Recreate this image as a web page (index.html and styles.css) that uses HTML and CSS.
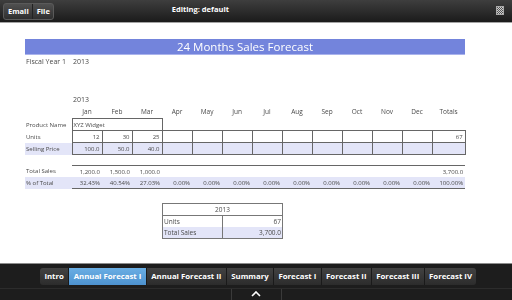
FILE: index.html
```html
<!DOCTYPE html>
<html lang="en">
<head>
    <meta charset="UTF-8">
    <title>24 Months Sales Forecast</title>
    <link rel="stylesheet" href="styles.css">
</head>
<body>

    <!-- Top toolbar -->
    <div class="topbar">
        <div class="btn-group">
            <div class="btn">Email</div>
            <div class="btn">File</div>
        </div>
        <div class="doc-title">Editing: default</div>
        <div class="fullscreen"></div>
    </div>

    <!-- Sheet -->
    <div class="page">
        <div class="sheet">
            <div class="sheet-title">24 Months Sales Forecast</div>

            <table class="grid">
                <colgroup>
                    <col class="c-label">
                    <col span="12" class="c-month">
                    <col class="c-total">
                </colgroup>
                <tr class="row-fiscal">
                    <td class="label big">Fiscal Year 1</td>
                    <td class="big" colspan="3">2013</td>
                    <td colspan="10"></td>
                </tr>
                <tr class="row-gap"><td colspan="14"></td></tr>
                <tr>
                    <td></td>
                    <td class="big" colspan="3">2013</td>
                    <td colspan="10"></td>
                </tr>
                <tr class="row-months">
                    <td></td>
                    <td>Jan</td><td>Feb</td><td>Mar</td><td>Apr</td><td>May</td><td>Jun</td>
                    <td>Jul</td><td>Aug</td><td>Sep</td><td>Oct</td><td>Nov</td><td>Dec</td>
                    <td>Totals</td>
                </tr>
                <tr>
                    <td class="label">Product Name</td>
                    <td class="box left" colspan="3">XYZ Widget</td>
                    <td colspan="10"></td>
                </tr>
                <tr>
                    <td class="label">Units</td>
                    <td class="box">12</td><td class="box">30</td><td class="box">25</td>
                    <td class="box"></td><td class="box"></td><td class="box"></td>
                    <td class="box"></td><td class="box"></td><td class="box"></td>
                    <td class="box"></td><td class="box"></td><td class="box"></td>
                    <td class="box">67</td>
                </tr>
                <tr class="shade">
                    <td class="label">Selling Price</td>
                    <td class="box">100.0</td><td class="box">50.0</td><td class="box">40.0</td>
                    <td class="box"></td><td class="box"></td><td class="box"></td>
                    <td class="box"></td><td class="box"></td><td class="box"></td>
                    <td class="box"></td><td class="box"></td><td class="box"></td>
                    <td class="box"></td>
                </tr>
                <tr class="row-gap-sm"><td colspan="14"></td></tr>
                <tr class="row-top">
                    <td class="label">Total Sales</td>
                    <td>1,200.0</td><td>1,500.0</td><td>1,000.0</td>
                    <td></td><td></td><td></td><td></td><td></td>
                    <td></td><td></td><td></td><td></td>
                    <td>3,700.0</td>
                </tr>
                <tr class="shade row-bottom">
                    <td class="label">% of Total</td>
                    <td>32.43%</td><td>40.54%</td><td>27.03%</td>
                    <td>0.00%</td><td>0.00%</td><td>0.00%</td><td>0.00%</td><td>0.00%</td>
                    <td>0.00%</td><td>0.00%</td><td>0.00%</td><td>0.00%</td>
                    <td>100.00%</td>
                </tr>
            </table>

            <table class="summary">
                <tr><td class="head" colspan="2">2013</td></tr>
                <tr><td>Units</td><td class="num">67</td></tr>
                <tr class="shade"><td>Total Sales</td><td class="num">3,700.0</td></tr>
            </table>
        </div>
    </div>

    <!-- Sheet tabs -->
    <div class="bottombar">
        <div class="tabs">
            <div class="tab">Intro</div>
            <div class="tab active">Annual Forecast I</div>
            <div class="tab">Annual Forecast II</div>
            <div class="tab">Summary</div>
            <div class="tab">Forecast I</div>
            <div class="tab">Forecast II</div>
            <div class="tab">Forecast III</div>
            <div class="tab">Forecast IV</div>
        </div>
        <div class="handle">
            <div class="handle-side"></div>
            <div class="handle-mid">
                <svg width="10" height="6" viewBox="0 0 10 6"><path d="M1 5 L5 1 L9 5" fill="none" stroke="#fff" stroke-width="1.6"/></svg>
            </div>
            <div class="handle-side"></div>
        </div>
    </div>

</body>
</html>
```

FILE: styles.css
```css
body {
    margin: 0;
    width: 512px;
    height: 300px;
    overflow: hidden;
    font-family: "Open Sans", "Noto Sans", sans-serif;
    background: #fff;
}

/* top toolbar */
.topbar {
    height: 22px;
    display: flex;
    align-items: center;
    padding: 0 3px;
    background: linear-gradient(#3e3e3e, #1b1b1b);
    border-bottom: 1px solid #a4a4a4;
}
.btn-group {
    display: flex;
    height: 15px;
    border: 1px solid #5a5a5a;
    border-radius: 3px;
    background: linear-gradient(#505050, #2f2f2f);
}
.btn {
    color: #fff;
    font-size: 7.5px;
    font-weight: bold;
    line-height: 15px;
    padding: 0 3px 0 4px;
}
.btn + .btn {
    border-left: 1px solid #222;
}
.doc-title {
    margin-left: 118px;
    color: #fff;
    font-size: 7.5px;
    font-weight: bold;
    margin-top: -4px;
}
.fullscreen {
    margin-left: auto;
    margin-right: 5px;
    margin-top: -2px;
    width: 6px;
    height: 7px;
    border: 1px solid #aaa;
    background: repeating-conic-gradient(#ccc 0 25%, #555 0 50%) 0 0 / 2px 2px;
}

/* sheet */
.page {
    height: 240px;
}
.sheet {
    margin-left: 25px;
    padding-top: 16px;
    width: 440px;
    will-change: transform;
}
.sheet-title {
    height: 15px;
    line-height: 15px;
    background: #7384dc;
    border-bottom: 1px solid #aab3ec;
    color: #fff;
    font-size: 11.5px;
    text-align: center;
}
.grid {
    border-collapse: collapse;
    table-layout: fixed;
    width: 440px;
    font-size: 6px;
    color: #4a4a4a;
}
.c-label { width: 47px; }
.c-month { width: 30px; }
.c-total { width: 33px; }
.grid td {
    height: 11px;
    padding: 0 2px;
    text-align: right;
    white-space: nowrap;
    overflow: hidden;
}
.grid td.label,
.grid td.left {
    text-align: left;
    padding-left: 1px;
}
.grid td.big {
    text-align: left;
    font-size: 7px;
    padding-left: 1px;
}
.row-fiscal td { height: 13px; }
.row-gap td { height: 26px; }
.row-gap-sm td { height: 10px; }
.row-months td {
    text-align: center;
    font-size: 6.5px;
    height: 13px;
}
.grid td.box {
    border: 1px solid #666;
}
.shade td {
    background: #e3e5f8;
}
.row-top td:not(.label) {
    border-top: 1px solid #666;
}
.row-bottom td:not(.label) {
    border-bottom: 1px solid #666;
}

/* summary */
.summary {
    margin: 14px 0 0 137px;
    width: 121px;
    border-collapse: collapse;
    table-layout: fixed;
    font-size: 6.5px;
    color: #4a4a4a;
    border: 1px solid #777;
}
.summary td {
    height: 11px;
    padding: 0 1px;
}
.summary td:first-child {
    width: 58px;
    border-right: 1px solid #777;
}
.summary td.head {
    text-align: center;
    border-bottom: 1px solid #777;
}
.summary td.num {
    text-align: right;
}

/* bottom tabs */
.bottombar {
    height: 36px;
    border-top: 1px solid #8c8c8c;
    background: #1d1d1d;
}
.tabs {
    display: flex;
    margin: 4px 0 0 40px;
    height: 17px;
}
.tab {
    color: #fff;
    font-size: 7.8px;
    font-weight: bold;
    line-height: 17px;
    padding: 0 4.4px;
    background: linear-gradient(#424242, #2c2c2c);
    border-right: 1px solid #1a1a1a;
}
.tab:first-child {
    border-radius: 3px 0 0 3px;
}
.tab:last-child {
    border-radius: 0 3px 3px 0;
    border-right: none;
}
.tab.active {
    background: linear-gradient(#6aaee4, #4d92cf);
}
.handle {
    display: flex;
    margin-top: 3px;
    height: 11px;
    border-top: 1px solid #2c2c2c;
}
.handle-side {
    flex: 1;
}
.handle-mid {
    width: 49px;
    border-left: 1px solid #3a3a3a;
    border-right: 1px solid #3a3a3a;
    display: flex;
    justify-content: center;
    padding-top: 2px;
}
```
